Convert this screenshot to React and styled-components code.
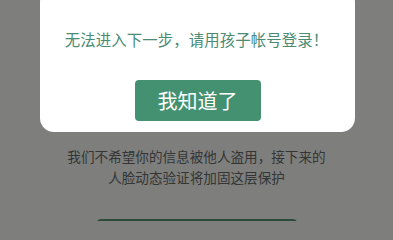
import React from 'react';
import styled, { createGlobalStyle } from 'styled-components';

const Global = createGlobalStyle`
  html, body {
    margin: 0;
    padding: 0;
    background: #7e7f7d;
  }
  body {
    font-family: "Noto Sans CJK SC", "Noto Sans", sans-serif;
  }
`;

const Screen = styled.div`
  position: relative;
  width: 393px;
  height: 221px;
  overflow: hidden;
  background: #7e7f7d;
`;

const Page = styled.div`
  display: flex;
  flex-direction: column;
  align-items: center;
  padding-top: 146px;
`;

const Notice = styled.p`
  margin: 0;
  font-size: 13.6px;
  line-height: 21px;
  color: #343534;
  text-align: center;
`;

const MainButton = styled.div`
  margin-top: 31px;
  width: 200px;
  height: 44px;
  border-radius: 4px;
  background: #2c4a39;
`;

const Dialog = styled.div`
  position: absolute;
  top: -12px;
  left: 40px;
  width: 315px;
  height: 144px;
  box-sizing: border-box;
  padding-top: 40px;
  border-radius: 14px;
  background: #ffffff;
  display: flex;
  flex-direction: column;
  align-items: center;
`;

const Message = styled.div`
  font-size: 15.4px;
  line-height: 22px;
  color: #4b8b74;
  letter-spacing: 0.1px;
  margin-left: -2px;
`;

const OkButton = styled.button`
  margin-top: 30px;
  width: 126px;
  height: 41px;
  border: none;
  border-radius: 4px;
  background: #449172;
  color: #ffffff;
  font-family: inherit;
  font-size: 20px;
  padding: 0;
`;

export default function App() {
  return (
    <Screen>
      <Global />
      <Page>
        <Notice>
          我们不希望你的信息被他人盗用，接下来的
          <br />
          人脸动态验证将加固这层保护
        </Notice>
        <MainButton />
      </Page>
      <Dialog>
        <Message>无法进入下一步，请用孩子帐号登录！</Message>
        <OkButton>我知道了</OkButton>
      </Dialog>
    </Screen>
  );
}
